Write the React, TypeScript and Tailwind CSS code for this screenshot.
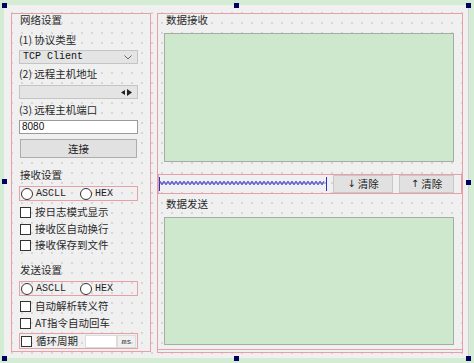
import React from "react";

const CJK = "[font-family:'Noto_Sans_CJK_SC','Noto_Sans',sans-serif]";
const MONO = "[font-family:'Liberation_Mono','DejaVu_Sans_Mono',monospace]";

function Label({ text, mt, className = "" }: { text: string; mt: string; className?: string }) {
  return (
    <div className={`${mt} h-[12px] leading-[12px] text-[10.5px] text-[#2a2a2a] whitespace-pre ${className}`}>{text}</div>
  );
}

function Check({ text, mt }: { text: string; mt: string }) {
  return (
    <div className={`${mt} h-[12px] flex items-center`}>
      <div className="ml-[1px] w-[11px] h-[11px] border border-[#333] bg-white shrink-0" />
      <span className="ml-[4px] text-[10.5px] leading-[12px] text-[#2a2a2a] whitespace-nowrap">{text}</span>
    </div>
  );
}

function RadioRow({ mt }: { mt: string }) {
  return (
    <div className={`${mt} h-[15px] border border-[#e8a0a8] flex items-center`}>
      <div className="ml-[1px] w-[12px] h-[12px] rounded-full border border-[#333] bg-white shrink-0" />
      <span className={`ml-[3px] ${MONO} text-[10px] leading-[12px] text-[#222]`}>ASCLL</span>
      <div className="ml-[14px] w-[12px] h-[12px] rounded-full border border-[#333] bg-white shrink-0" />
      <span className={`ml-[3px] ${MONO} text-[10px] leading-[12px] text-[#222]`}>HEX</span>
    </div>
  );
}

function Wave() {
  let d = "M0 7";
  for (let x = 0; x < 166; x += 2) {
    d += ` L${x + 1} ${x % 4 === 0 ? 5 : 9} `;
  }
  return (
    <svg width="168" height="16" viewBox="0 0 168 16" className="shrink-0">
      <line x1="0.5" y1="1" x2="0.5" y2="15" stroke="#3030c0" strokeWidth="1" />
      <line x1="167.5" y1="1" x2="167.5" y2="15" stroke="#3030c0" strokeWidth="1" />
      <path d={d} stroke="#4848d0" strokeWidth="0.9" fill="none" />
      <line x1="1" y1="7" x2="167" y2="7" stroke="#3030c0" strokeWidth="0.6" />
    </svg>
  );
}

function Handle({ className }: { className: string }) {
  return <div className={`absolute w-[5px] h-[5px] bg-[#000060] ${className}`} />;
}

export default function App() {
  return (
    <div className={`relative w-[474px] h-[363px] bg-[#d4ebd4] overflow-hidden pl-[4px] pt-[5px] ${CJK}`}>
      <div className="w-[465px] h-[353px] bg-[#f0f0f0] bg-[radial-gradient(circle,#cdcdcd_0.6px,transparent_1px)] bg-[size:10px_10px] bg-[position:3px_3px] flex items-start pl-[7px] pt-[8px] gap-[6px] border-r border-[#d0d0d0]">
        {/* Left column */}
        <div className="w-[140px] h-[339px] border border-[#e8a0a8] flex flex-col pl-[7px] pr-[12px]">
          <Label text="网络设置" mt="mt-[0px]" className="h-[10px] leading-[10px] pl-[1px]" />
          <Label text="(1) 协议类型" mt="mt-[8px]" />
          <div className="mt-[4px] h-[14px] bg-[#e4e4e4] border border-[#c4c4c4] flex items-center justify-between pl-[3px] pr-[5px]">
            <span className={`${MONO} text-[10px] leading-[12px] text-[#111]`}>TCP Client</span>
            <svg width="8" height="5" viewBox="0 0 8 5">
              <polyline points="0.5,0.5 4,4 7.5,0.5" stroke="#666" strokeWidth="1" fill="none" />
            </svg>
          </div>
          <Label text="(2) 远程主机地址" mt="mt-[4px]" />
          <div className="mt-[5px] h-[14px] bg-[#e4e4e4] border border-[#c4c4c4] flex items-center justify-end pr-[5px] gap-[2px]">
            <svg width="4" height="5" viewBox="0 0 4 5"><polygon points="4,0 0,2.5 4,5" fill="#222" /></svg>
            <svg width="5" height="7" viewBox="0 0 5 7"><polygon points="0,0 5,3.5 0,7" fill="#222" /></svg>
          </div>
          <Label text="(3) 远程主机端口" mt="mt-[5px]" />
          <div className="mt-[4px] h-[14px] bg-white border border-[#9a9a9a] flex items-center pl-[2px]">
            <span className="[font-family:'Liberation_Sans',sans-serif] text-[10px] leading-[12px] text-[#111]">8080</span>
          </div>
          <div className="mt-[5px] ml-[1px] mr-[1px] h-[19px] bg-[#e1e1e1] border border-[#adadad] flex items-center justify-center">
            <span className="text-[10.5px] leading-[12px] text-[#222]">连接</span>
          </div>
          <Label text="接收设置" mt="mt-[11px]" className="pl-[1px]" />
          <RadioRow mt="mt-[5px]" />
          <Check text="按日志模式显示" mt="mt-[5px]" />
          <Check text="接收区自动换行" mt="mt-[5px]" />
          <Check text="接收保存到文件" mt="mt-[4px]" />
          <Label text="发送设置" mt="mt-[13px]" className="pl-[1px]" />
          <RadioRow mt="mt-[5px]" />
          <Check text="自动解析转义符" mt="mt-[4px]" />
          <Check text="AT指令自动回车" mt="mt-[5px]" />
          <div className="mt-[4px] h-[16px] border border-[#e8a0a8] flex items-center">
            <div className="ml-[1px] w-[11px] h-[11px] border border-[#333] bg-white shrink-0" />
            <span className="ml-[4px] text-[10.5px] leading-[12px] text-[#2a2a2a] whitespace-nowrap">循环周期</span>
            <div className="ml-[7px] w-[32px] h-[13px] bg-white border border-[#dcdcdc]" />
            <div className="w-[19px] h-[13px] border border-[#dcdcdc] flex items-end justify-center">
              <span className={`${MONO} text-[8px] leading-[10px] text-[#333]`}>ms</span>
            </div>
          </div>
        </div>

        {/* Right column */}
        <div className="w-[306px] h-[340px] border border-[#e8a0a8] flex flex-col">
          <Label text="数据接收" mt="mt-[0px]" className="h-[10px] leading-[10px] pl-[8px]" />
          <div className="mt-[7px] ml-[6px] w-[290px] h-[129px] bg-[#cde8cd] border border-[#a4aca4]" />
          <div className="mt-[12px] h-[20px] border border-[#e8a0a8] flex items-center pr-[6px]">
            <Wave />
            <div className="ml-[6px] w-[60px] h-[18px] bg-[#e1e1e1] border border-[#c8c8c8] flex items-center justify-center text-[10.5px] leading-[12px] text-[#222]">
              <span className="[font-family:'DejaVu_Sans',sans-serif] text-[10px] mr-[2px]">↓</span>清除
            </div>
            <div className="ml-[6px] w-[55px] h-[18px] bg-[#e1e1e1] border border-[#c8c8c8] flex items-center justify-center text-[10.5px] leading-[12px] text-[#222]">
              <span className="[font-family:'DejaVu_Sans',sans-serif] text-[10px] mr-[2px]">↑</span>清除
            </div>
          </div>
          <Label text="数据发送" mt="mt-[4px]" className="pl-[8px]" />
          <div className="mt-[7px] ml-[6px] w-[290px] h-[128px] bg-[#cde8cd] border border-[#a4aca4]" />
          <div className="mt-[4px] h-px bg-[#e8a0a8]" />
        </div>
      </div>

      <Handle className="left-[2px] top-[3px]" />
      <Handle className="left-[234px] top-[3px]" />
      <Handle className="left-[466px] top-[3px]" />
      <Handle className="left-[2px] top-[179px]" />
      <Handle className="left-[466px] top-[180px]" />
      <Handle className="left-[2px] top-[356px]" />
      <Handle className="left-[234px] top-[356px]" />
      <Handle className="left-[466px] top-[356px]" />
    </div>
  );
}
